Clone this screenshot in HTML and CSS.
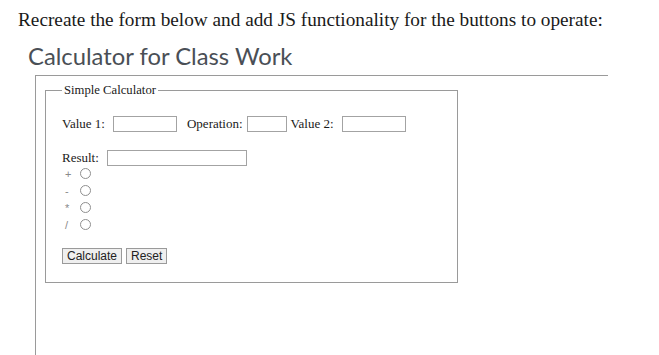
FILE: index.html
```html
<!DOCTYPE html>
<html lang="en">
<head>
  <meta charset="UTF-8">
  <title>Calculator for Class Work</title>
  <link rel="stylesheet" href="styles.css">
</head>
<body>

  <p class="intro">Recreate the form below and add JS functionality for the buttons to operate:</p>

  <h1 class="title">Calculator for Class Work</h1>

  <div class="frame">
    <form class="calc" onsubmit="return false">
      <fieldset>
        <legend>Simple Calculator</legend>

        <div class="row">
          <label for="val1">Value 1:</label>
          <input type="text" id="val1" class="field">
          <label for="op" class="tight gap">Operation:</label>
          <input type="text" id="op" class="field small">
          <label for="val2" class="after-op">Value 2:</label>
          <input type="text" id="val2" class="field">
        </div>

        <div class="row result-row">
          <label for="result">Result:</label>
          <input type="text" id="result" class="field wide" readonly>
        </div>

        <div class="ops">
          <label class="op"><span class="sign">+</span><input type="radio" name="op" value="+" onclick="pickOp(this)"></label>
          <label class="op"><span class="sign">-</span><input type="radio" name="op" value="-" onclick="pickOp(this)"></label>
          <label class="op"><span class="sign">*</span><input type="radio" name="op" value="*" onclick="pickOp(this)"></label>
          <label class="op"><span class="sign">/</span><input type="radio" name="op" value="/" onclick="pickOp(this)"></label>
        </div>

        <div class="buttons">
          <button type="button" onclick="calculate()">Calculate</button>
          <button type="reset" onclick="resetCalc()">Reset</button>
        </div>
      </fieldset>
    </form>
  </div>

  <script src="script.js"></script>

</body>
</html>
```

FILE: styles.css
```css
body {
  margin: 0;
  font-family: "Liberation Serif", "Times New Roman", serif;
  color: #1a1a1a;
  background: #fff;
}

.intro {
  margin: 0;
  padding: 9px 0 0 18px;
  font-size: 19.25px;
  line-height: 22px;
}

.title {
  margin: 11px 0 0 28px;
  font-family: Lato, "Open Sans", sans-serif;
  font-weight: 400;
  font-size: 23.8px;
  line-height: 28px;
  color: #4a4f56;
}

.frame {
  margin: 5px 0 0 35px;
  width: 563px;
  height: 280px;
  border-top: 1px solid #9a9a9a;
  border-left: 1px solid #9a9a9a;
  padding: 7px 0 0 9px;
}

.calc fieldset {
  width: 395px;
  height: 180px;
  margin: 0;
  padding: 18px 0 0 16px;
  border: 1px solid #9a9a9a;
  font-size: 13px;
}

.calc legend {
  padding: 0 2px;
  font-size: 12.7px;
}

.row {
  display: flex;
  align-items: center;
  height: 16px;
}

.row label {
  margin-right: 8px;
}

.row .tight {
  margin-right: 4px;
}

.row .gap {
  margin-left: 10px;
}

.row .after-op {
  margin-left: 4px;
}

.result-row {
  margin-top: 18px;
}

.field {
  box-sizing: border-box;
  width: 64px;
  height: 16px;
  padding: 0 2px;
  border: 1px solid #a3a3a3;
  font-size: 12px;
  background: #fff;
}

.field.small {
  width: 40px;
}

.field.wide {
  width: 140px;
}

.ops {
  display: flex;
  flex-direction: column;
  margin-top: -1px;
}

.op {
  display: flex;
  align-items: center;
  height: 17px;
  font-family: "Liberation Sans", Arial, sans-serif;
  font-size: 11px;
  color: #8a8a8a;
}

.sign {
  width: 15px;
  padding-left: 3px;
}

.op input {
  appearance: none;
  width: 11px;
  height: 11px;
  margin: 0;
  border: 1px solid #8f8f8f;
  border-radius: 50%;
  background: #fff;
}

.op input:checked {
  background: radial-gradient(circle, #555 0 3px, #fff 3.5px);
}

.buttons {
  margin-top: 15px;
  display: flex;
  gap: 4px;
}

.buttons button {
  height: 16px;
  padding: 0 4px;
  border: 1px solid #9a9a9a;
  border-radius: 0;
  background: #efefef;
  font-family: "Liberation Sans", Arial, sans-serif;
  font-size: 12px;
  line-height: 14px;
  color: #222;
}
```

FILE: script.js
```js
function pickOp(radio) {
  document.getElementById("op").value = radio.value;
}

function calculate() {
  const a = parseFloat(document.getElementById("val1").value);
  const b = parseFloat(document.getElementById("val2").value);
  const op = document.getElementById("op").value.trim();
  let result;

  if (isNaN(a) || isNaN(b)) {
    result = "Enter two numbers";
  } else if (op === "+") {
    result = a + b;
  } else if (op === "-") {
    result = a - b;
  } else if (op === "*") {
    result = a * b;
  } else if (op === "/") {
    result = b === 0 ? "Cannot divide by 0" : a / b;
  } else {
    result = "Pick an operation";
  }

  document.getElementById("result").value = result;
}

function resetCalc() {
  document.getElementById("result").value = "";
}
```
